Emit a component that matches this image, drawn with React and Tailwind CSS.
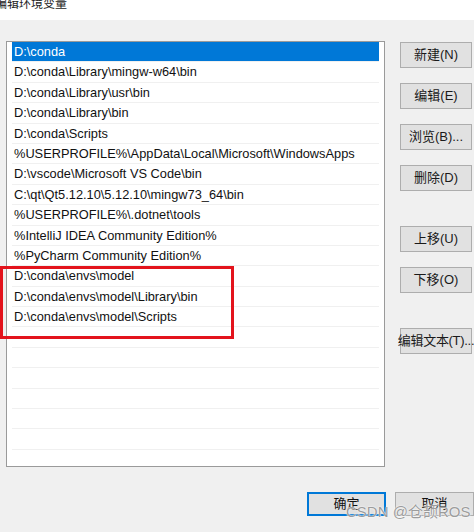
import React from "react";

const paths = [
  "D:\\conda",
  "D:\\conda\\Library\\mingw-w64\\bin",
  "D:\\conda\\Library\\usr\\bin",
  "D:\\conda\\Library\\bin",
  "D:\\conda\\Scripts",
  "%USERPROFILE%\\AppData\\Local\\Microsoft\\WindowsApps",
  "D:\\vscode\\Microsoft VS Code\\bin",
  "C:\\qt\\Qt5.12.10\\5.12.10\\mingw73_64\\bin",
  "%USERPROFILE%\\.dotnet\\tools",
  "%IntelliJ IDEA Community Edition%",
  "%PyCharm Community Edition%",
  "D:\\conda\\envs\\model",
  "D:\\conda\\envs\\model\\Library\\bin",
  "D:\\conda\\envs\\model\\Scripts",
];

const font = { fontFamily: '"Liberation Sans", "Noto Sans CJK SC", sans-serif' };

const Btn = ({ children, className = "" }) => (
  <button
    className={
      "w-[72px] h-[26px] bg-[#e1e1e1] border border-[#adadad] text-[13px] text-[#1a1a1a] flex items-center justify-center whitespace-nowrap " +
      className
    }
  >
    {children}
  </button>
);

export default function App() {
  const rows = [...paths, ...Array(7).fill("")];
  return (
    <div className="w-[474px] h-[532px] bg-[#f0f0f0] overflow-hidden relative" style={font}>
      <div className="h-[20px] bg-white overflow-hidden">
        <div className="text-[12px] text-[#222] leading-[12px] -mt-[2px] -ml-[5px]">编辑环境变量</div>
      </div>

      <div className="flex pt-[21px]">
        <div className="ml-[6px] w-[379px] h-[426px] bg-white border border-[#9a9a9a] overflow-hidden px-[5px]">
          {rows.map((p, i) => (
            <div
              key={i}
              className={
                "h-[20.4px] flex items-center pl-[2px] text-[12.8px] border-b border-[#f0f0f0] whitespace-nowrap " +
                (i === 0 ? "bg-[#0078d7] text-white" : "text-[#111]")
              }
            >
              {p}
            </div>
          ))}
        </div>

        <div className="ml-[15px] flex flex-col pt-[1px]">
          <Btn>新建(N)</Btn>
          <Btn className="mt-[15px]">编辑(E)</Btn>
          <Btn className="mt-[15px]">浏览(B)...</Btn>
          <Btn className="mt-[15px]">删除(D)</Btn>
          <Btn className="mt-[35px]">上移(U)</Btn>
          <Btn className="mt-[15px]">下移(O)</Btn>
          <Btn className="mt-[35px] text-[12px] tracking-[-0.3px]">编辑文本(T)...</Btn>
        </div>
      </div>

      <div className="flex mt-[25px] ml-[307px] gap-[9px]">
        <button className="w-[83px] h-[24px] bg-[#e1e1e1] border-2 border-[#0078d7] text-[13px] text-[#111]">确定</button>
        <button className="w-[83px] h-[24px] bg-[#e1e1e1] border border-[#adadad] text-[13px] text-[#111]">取消</button>
      </div>

      {/* red highlight box */}
      <div className="absolute left-0 top-[266px] w-[234px] h-[73px] border-[3px] border-[#e3131c]" />

      {/* watermark */}
      <div
        className="absolute left-[346px] top-[504px] text-[15px] leading-[16px] text-[#9c9c9c]"
        style={{ textShadow: "0 0 2px #fff, 0 0 1px #fff" }}
      >
        CSDN @仓颉ROS
      </div>
    </div>
  );
}
